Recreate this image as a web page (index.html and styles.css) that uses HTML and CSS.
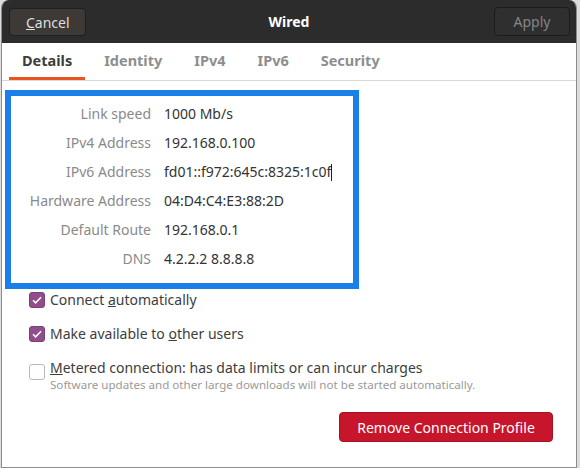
FILE: index.html
```html
<!DOCTYPE html>
<html lang="en">
<head>
  <meta charset="UTF-8">
  <title>Wired</title>
  <link rel="stylesheet" href="styles.css">
</head>
<body>
  <div class="window">
    <div class="headerbar">
      <button class="hbtn hbtn--cancel"><u>C</u>ancel</button>
      <div class="title">Wired</div>
      <button class="hbtn hbtn--apply">Apply</button>
    </div>
    <div class="tabs">
      <div class="tab tab--active">Details</div>
      <div class="tab">Identity</div>
      <div class="tab">IPv4</div>
      <div class="tab">IPv6</div>
      <div class="tab">Security</div>
    </div>
    <div class="content">
      <div class="details">
        <div class="label">Link speed</div><div class="value">1000 Mb/s</div>
        <div class="label">IPv4 Address</div><div class="value">192.168.0.100</div>
        <div class="label">IPv6 Address</div><div class="value">fd01::f972:645c:8325:1c0f<span class="caret"></span></div>
        <div class="label">Hardware Address</div><div class="value">04:D4:C4:E3:88:2D</div>
        <div class="label">Default Route</div><div class="value">192.168.0.1</div>
        <div class="label">DNS</div><div class="value">4.2.2.2 8.8.8.8</div>
      </div>
      <div class="checks">
        <div class="check">
          <span class="box box--on"><svg viewBox="0 0 16 16" width="16" height="16"><path d="M4 8.3l2.6 2.6L12 5.3" fill="none" stroke="#fff" stroke-width="1.6"/></svg></span>
          <span class="check-text">Connect <u>a</u>utomatically</span>
        </div>
        <div class="check">
          <span class="box box--on"><svg viewBox="0 0 16 16" width="16" height="16"><path d="M4 8.3l2.6 2.6L12 5.3" fill="none" stroke="#fff" stroke-width="1.6"/></svg></span>
          <span class="check-text">Make available to <u>o</u>ther users</span>
        </div>
        <div class="check check--metered">
          <span class="box"></span>
          <div>
            <div class="check-text"><u>M</u>etered connection: has data limits or can incur charges</div>
            <div class="check-sub">Software updates and other large downloads will not be started automatically.</div>
          </div>
        </div>
      </div>
      <div class="actions">
        <button class="btn-remove">Remove Connection Profile</button>
      </div>
    </div>
  </div>
</body>
</html>
```

FILE: styles.css
```css
html, body {
  margin: 0;
  height: 100%;
}
body {
  background: #dcdcdc;
  font-family: "Noto Sans", "Open Sans", sans-serif;
  font-size: 14px;
  color: #3d3d3d;
}
.window {
  box-sizing: border-box;
  width: 576px;
  height: 468px;
  margin-left: 1px;
  background: #ffffff;
  border: 1px solid #8c8c8c;
  border-top: none;
  border-radius: 8px 8px 0 0;
  overflow: hidden;
}
.headerbar {
  height: 43px;
  background: #2c2c2c;
  display: flex;
  align-items: flex-start;
  justify-content: space-between;
  padding: 7px 6px 0 7px;
  box-sizing: border-box;
}
.hbtn {
  font-family: inherit;
  font-size: 14px;
  height: 29px;
  border-radius: 4px;
  padding: 0 16px;
  cursor: pointer;
}
.hbtn--cancel {
  width: 77px;
  background: #3c3937;
  border: 1px solid #1f1f1f;
  color: #dedede;
  margin-top: 1px;
  height: 28px;
}
.hbtn--apply {
  width: 76px;
  background: #2f2f2f;
  border: 1px solid #1c1c1c;
  color: #858585;
}
.title {
  color: #ffffff;
  font-weight: bold;
  font-size: 14px;
  line-height: 29px;
  margin-left: -2px;
}
.tabs {
  display: flex;
  height: 37px;
  border-bottom: 1px solid #d9d9d9;
  padding-left: 7px;
}
.tab {
  font-weight: bold;
  font-size: 14.5px;
  color: #8e8e8e;
  padding: 0 13px;
  line-height: 34px;
  border-bottom: 3px solid transparent;
  margin-right: 6px;
}
.tab--active {
  color: #3d3d3d;
  border-bottom-color: #e95420;
}
.content {
  padding: 9px 0 0 3px;
}
.details {
  width: 342px;
  border: 6px solid #1a7fe9;
  display: grid;
  grid-template-columns: 140px 1fr;
  column-gap: 13px;
  padding: 3px 0 10px;
  line-height: 29px;
}
.label {
  text-align: right;
  color: #8a8a8a;
}
.value {
  color: #333333;
  white-space: nowrap;
}
.caret {
  display: inline-block;
  width: 1px;
  height: 17px;
  background: #222;
  vertical-align: -4px;
}
.checks {
  padding-left: 24px;
  margin-top: 1px;
}
.check {
  display: flex;
  align-items: center;
  gap: 5px;
  height: 20px;
  margin-bottom: 14px;
}
.check--metered {
  align-items: flex-start;
  margin-top: 13px;
}
.check--metered .box {
  margin-top: 6px;
}
.box {
  box-sizing: border-box;
  width: 16px;
  height: 16px;
  border-radius: 3px;
  border: 1px solid #b8b8b8;
  background: #ffffff;
  flex: none;
}
.box--on {
  background: #924d8b;
  border-color: #7d3f77;
}
.box svg {
  display: block;
  margin: -1px;
}
.check-text {
  color: #3d3d3d;
  line-height: 20px;
}
.check-sub {
  font-size: 11.6px;
  color: #9a9a9a;
  line-height: 14px;
}
.actions {
  display: flex;
  justify-content: flex-end;
  padding: 20px 23px 0 0;
}
.btn-remove {
  font-family: inherit;
  font-size: 14px;
  width: 214px;
  height: 30px;
  background: #c7162b;
  color: #ffffff;
  border: 1px solid #a51224;
  border-radius: 4px;
}
```
